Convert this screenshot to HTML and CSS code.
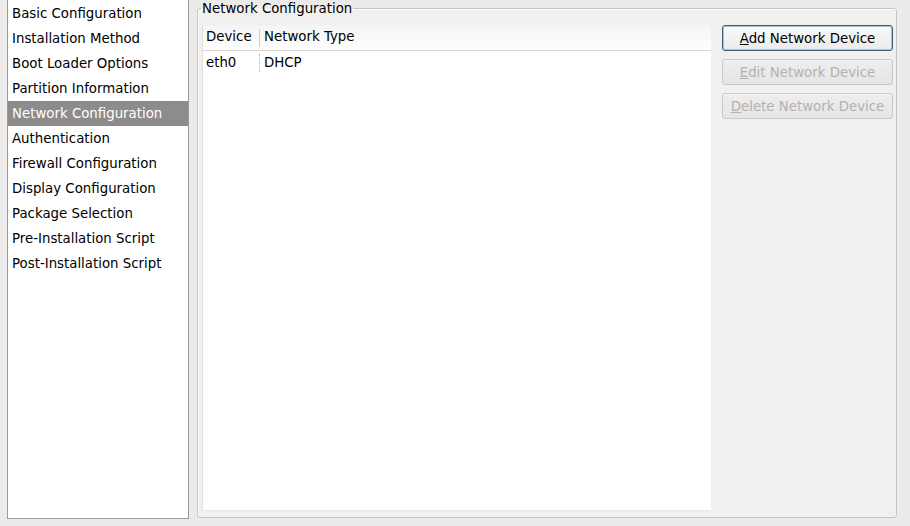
FILE: index.html
```html
<!DOCTYPE html>
<html>
<head>
<meta charset="utf-8">
<title>Network Configuration</title>
<link rel="stylesheet" href="styles.css">
</head>
<body>
<div class="app">
  <ul class="sidebar">
    <li class="item">Basic Configuration</li>
    <li class="item">Installation Method</li>
    <li class="item">Boot Loader Options</li>
    <li class="item">Partition Information</li>
    <li class="item selected">Network Configuration</li>
    <li class="item">Authentication</li>
    <li class="item">Firewall Configuration</li>
    <li class="item">Display Configuration</li>
    <li class="item">Package Selection</li>
    <li class="item">Pre-Installation Script</li>
    <li class="item">Post-Installation Script</li>
  </ul>
  <fieldset class="frame">
    <legend class="frame-label">Network Configuration</legend>
    <div class="frame-body">
      <div class="tree">
        <div class="tree-header">
          <div class="cell col-device">Device</div>
          <div class="cell col-type sep">Network Type</div>
        </div>
        <div class="tree-row">
          <div class="cell col-device">eth0</div>
          <div class="cell col-type dotted">DHCP</div>
        </div>
      </div>
      <div class="buttons">
        <button class="btn btn-default"><u>A</u>dd Network Device</button>
        <button class="btn" disabled><u>E</u>dit Network Device</button>
        <button class="btn" disabled><u>D</u>elete Network Device</button>
      </div>
    </div>
  </fieldset>
</div>
</body>
</html>
```

FILE: styles.css
```css
html, body {
  margin: 0;
  padding: 0;
}
body {
  background: #ecebea;
  font-family: "DejaVu Sans", "Liberation Sans", sans-serif;
  font-size: 13.33px;
  color: #000;
  width: 910px;
  height: 526px;
  overflow: hidden;
}
.app {
  display: flex;
  align-items: flex-start;
}
.sidebar {
  list-style: none;
  margin: 0 0 0 7px;
  padding: 1px 0 0 0;
  box-sizing: border-box;
  width: 182px;
  height: 519px;
  background: #fff;
  border: 1px solid #9c9a9a;
  border-top: none;
}
.item {
  height: 25px;
  line-height: 25px;
  padding-left: 4px;
  white-space: nowrap;
}
.item.selected {
  background: #8d8b8b;
  color: #fff;
}
.frame {
  margin: 0 0 0 8px;
  padding: 0;
  box-sizing: border-box;
  width: 700px;
  height: 518px;
  border: 1px solid #c6c4c4;
  border-radius: 3px;
  background: #f1f0ef;
  box-shadow: inset 1px 1px 0 #fbfbfb;
  min-width: 0;
}
.frame-label {
  margin-left: 3px;
  padding: 0 1px;
  line-height: 17px;
  color: #000;
}
.frame-body {
  display: flex;
  gap: 11px;
  padding: 8px 3px 0 4px;
}
.tree {
  width: 509px;
  height: 486px;
  box-sizing: border-box;
  background: #fff;
  box-shadow: inset 1px 0 0 #e2e0e0, inset 0 -1px 0 #e8e6e6;
}
.tree-header {
  display: flex;
  height: 26px;
  box-sizing: border-box;
  border-bottom: 1px solid #d6d4d4;
  background: linear-gradient(#f6f5f5, #fefefe);
  box-shadow: inset 1px 0 0 #e2e0e0;
}
.tree-row {
  display: flex;
  height: 24px;
}
.cell {
  line-height: 24px;
  white-space: nowrap;
  position: relative;
}
.col-device {
  width: 57px;
  padding-left: 4px;
  box-sizing: border-box;
}
.col-type {
  padding-left: 5px;
}
.sep::before {
  content: "";
  position: absolute;
  left: 0;
  top: 4px;
  bottom: 3px;
  border-left: 1px solid #cfcdcd;
}
.dotted::before {
  content: "";
  position: absolute;
  left: 0;
  top: 3px;
  bottom: 3px;
  border-left: 1px dotted #b4b2b2;
}
.buttons {
  width: 171px;
  display: flex;
  flex-direction: column;
  gap: 8px;
}
.btn {
  height: 26px;
  box-sizing: border-box;
  border: 1px solid #c9c7c7;
  border-radius: 3px;
  background: linear-gradient(#efeeee, #e6e5e5);
  color: #b3b1b1;
  font-family: "DejaVu Sans", "Liberation Sans", sans-serif;
  font-size: 13.33px;
  padding: 0;
  text-align: center;
  white-space: nowrap;
  box-shadow: inset 0 1px 0 #f6f6f6;
}
.btn-default {
  border: 1px solid #3f6178;
  background: linear-gradient(#fafafa, #eceaea);
  color: #000;
  box-shadow: inset 0 0 0 1px #a9c2d2;
}
```
